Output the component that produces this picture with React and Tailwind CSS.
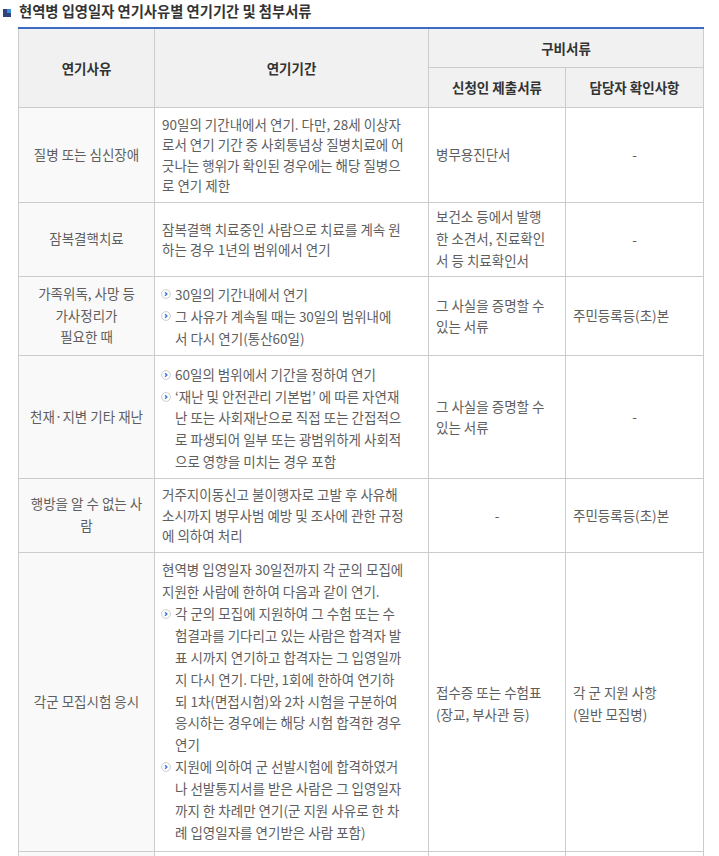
import React from "react";

const Lines = ({ lines }) => (
  <>
    {lines.map((l, i) => (
      <React.Fragment key={i}>
        {i > 0 && <br />}
        {l}
      </React.Fragment>
    ))}
  </>
);

const Dot = () => (
  <svg width="10" height="10" viewBox="0 0 10 10" className="block">
    <circle cx="5" cy="5" r="4.4" fill="#fff" stroke="#cdcdcd" strokeWidth="1" />
    <path d="M4 3.2 L5.9 5 L4 6.8" fill="none" stroke="#3b78d8" strokeWidth="1.4" />
  </svg>
);

const Bullet = ({ lines, lh = "leading-[22px]" }) => (
  <div className={`flex ${lh}`}>
    <span className="w-[14px] shrink-0 ml-[-1px] flex items-center h-[22px]">
      <Dot />
    </span>
    <span>
      <Lines lines={lines} />
    </span>
  </div>
);

const th = "border border-[#cccccc] bg-[#f1f1f1] font-bold text-[#333] text-center align-middle text-[13.5px]";
const c1 = "border border-[#cccccc] bg-[#f9f9f9] text-center align-middle px-[4px] leading-[21.7px]";
const td = "border border-[#cccccc] bg-white align-middle px-[7px] whitespace-nowrap";
const dash = "border border-[#cccccc] bg-white align-middle text-center";

export default function App() {
  return (
    <div className="bg-white w-[719px] min-h-[856px] font-['Noto_Sans_CJK_KR',sans-serif] text-[13.5px] text-[#5e5e5e]">
      <div className="flex items-center h-[22px] pl-[3px] gap-[8px]">
        <svg width="8" height="8" viewBox="0 0 8 8" className="mt-[3px] shrink-0">
          <rect x="0" y="0" width="8" height="8" fill="#2f4478" />
          <rect x="4" y="0" width="4" height="4" fill="#3c8ce0" />
        </svg>
        <span className="font-bold text-[#333] text-[14.3px]">현역병 입영일자 연기사유별 연기기간 및 첨부서류</span>
      </div>
      <table className="mt-[5px] ml-[18px] w-[685px] border-collapse table-fixed border-t-2 border-t-[#3d6bc1]">
        <colgroup>
          <col className="w-[136px]" />
          <col className="w-[274px]" />
          <col className="w-[137px]" />
          <col className="w-[138px]" />
        </colgroup>
        <thead>
          <tr className="h-[39px]">
            <th rowSpan={2} className={th + " !border-t-[#3d6bc1] !border-t-2"}>연기사유</th>
            <th rowSpan={2} className={th + " !border-t-[#3d6bc1] !border-t-2"}>연기기간</th>
            <th colSpan={2} className={th + " !border-t-[#3d6bc1] !border-t-2"}>구비서류</th>
          </tr>
          <tr className="h-[40px]">
            <th className={th}>신청인 제출서류</th>
            <th className={th}>담당자 확인사항</th>
          </tr>
        </thead>
        <tbody>
          <tr className="h-[95px]">
            <td className={c1}>질병 또는 심신장애</td>
            <td className={td + " leading-[20.5px]"}>
              <Lines
                lines={[
                  "90일의 기간내에서 연기. 다만, 28세 이상자",
                  "로서 연기 기간 중 사회통념상 질병치료에 어",
                  "긋나는 행위가 확인된 경우에는 해당 질병으",
                  "로 연기 제한",
                ]}
              />
            </td>
            <td className={td}>병무용진단서</td>
            <td className={dash}>-</td>
          </tr>
          <tr className="h-[74px]">
            <td className={c1}>잠복결핵치료</td>
            <td className={td + " leading-[20px]"}>
              <Lines lines={["잠복결핵 치료중인 사람으로 치료를 계속 원", "하는 경우 1년의 범위에서 연기"]} />
            </td>
            <td className={td + " leading-[21.7px]"}>
              <Lines lines={["보건소 등에서 발행", "한 소견서, 진료확인", "서 등 치료확인서"]} />
            </td>
            <td className={dash}>-</td>
          </tr>
          <tr className="h-[79px]">
            <td className={c1}>
              <Lines lines={["가족위독, 사망 등", "가사정리가", "필요한 때"]} />
            </td>
            <td className={td}>
              <Bullet lines={["30일의 기간내에서 연기"]} />
              <Bullet lines={["그 사유가 계속될 때는 30일의 범위내에", "서 다시 연기(통산60일)"]} />
            </td>
            <td className={td + " leading-[20.5px]"}>
              <Lines lines={["그 사실을 증명할 수", "있는 서류"]} />
            </td>
            <td className={td}>주민등록등(초)본</td>
          </tr>
          <tr className="h-[123px]">
            <td className={c1}>천재·지변 기타 재난</td>
            <td className={td + " pt-[3px]"}>
              <Bullet lines={["60일의 범위에서 기간을 정하여 연기"]} lh="leading-[21.7px]" />
              <Bullet
                lh="leading-[21.7px]"
                lines={[
                  "‘재난 및 안전관리 기본법’ 에 따른 자연재",
                  "난 또는 사회재난으로 직접 또는 간접적으",
                  "로 파생되어 일부 또는 광범위하게 사회적",
                  "으로 영향을 미치는 경우 포함",
                ]}
              />
            </td>
            <td className={td + " leading-[20.5px]"}>
              <Lines lines={["그 사실을 증명할 수", "있는 서류"]} />
            </td>
            <td className={dash}>-</td>
          </tr>
          <tr className="h-[74px]">
            <td className={c1}>
              <Lines lines={["행방을 알 수 없는 사", "람"]} />
            </td>
            <td className={td + " leading-[20.7px]"}>
              <Lines
                lines={[
                  "거주지이동신고 불이행자로 고발 후 사유해",
                  "소시까지 병무사범 예방 및 조사에 관한 규정",
                  "에 의하여 처리",
                ]}
              />
            </td>
            <td className={dash}>-</td>
            <td className={td}>주민등록등(초)본</td>
          </tr>
          <tr className="h-[299px]">
            <td className={c1}>각군 모집시험 응시</td>
            <td className={td + " leading-[21.9px]"}>
              <Lines lines={["현역병 입영일자 30일전까지 각 군의 모집에", "지원한 사람에 한하여 다음과 같이 연기."]} />
              <Bullet
                lh="leading-[21.9px]"
                lines={[
                  "각 군의 모집에 지원하여 그 수험 또는 수",
                  "험결과를 기다리고 있는 사람은 합격자 발",
                  "표 시까지 연기하고 합격자는 그 입영일까",
                  "지 다시 연기. 다만, 1회에 한하여 연기하",
                  "되 1차(면접시험)와 2차 시험을 구분하여",
                  "응시하는 경우에는 해당 시험 합격한 경우",
                  "연기",
                ]}
              />
              <Bullet
                lh="leading-[21.9px]"
                lines={[
                  "지원에 의하여 군 선발시험에 합격하였거",
                  "나 선발통지서를 받은 사람은 그 입영일자",
                  "까지 한 차례만 연기(군 지원 사유로 한 차",
                  "례 입영일자를 연기받은 사람 포함)",
                ]}
              />
            </td>
            <td className={td + " leading-[21.7px] pt-[4px]"}>
              <Lines lines={["접수증 또는 수험표", "(장교, 부사관 등)"]} />
            </td>
            <td className={td + " leading-[21.7px] pt-[4px]"}>
              <Lines lines={["각 군 지원 사항", "(일반 모집병)"]} />
            </td>
          </tr>
          <tr className="h-[60px]">
            <td className={c1}>&nbsp;</td>
            <td className={td}>&nbsp;</td>
            <td className={td}>&nbsp;</td>
            <td className={td}>&nbsp;</td>
          </tr>
        </tbody>
      </table>
    </div>
  );
}
